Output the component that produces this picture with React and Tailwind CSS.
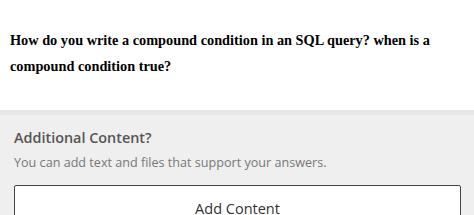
export default function App() {
  return (
    <div className="w-[474px] h-[215px] overflow-hidden bg-white">
      <div className="h-[110px] bg-white px-[10px] pt-[27px]">
        <p className="font-['Liberation_Serif',serif] font-bold text-[14.3px] leading-[26px] text-black">
          How do you write a compound condition in an SQL query? when is a compound condition true?
        </p>
      </div>
      <div className="h-[105px] bg-[#efefef] border-t-[5px] border-[#e6e6e6] px-[14px] pt-[13px] font-['Open_Sans',sans-serif]">
        <h3 className="text-[14.4px] font-semibold leading-[20px] text-[#555]">Additional Content?</h3>
        <p className="mt-[5px] text-[12.6px] leading-[20px] text-[#777]">You can add text and files that support your answers.</p>
        <button className="mt-[12px] w-[447px] h-[40px] bg-white border-[1.5px] border-[#444] rounded-[2px] text-[14.5px] leading-[20px] text-[#333] pt-[13px] flex justify-center">
          Add Content
        </button>
      </div>
    </div>
  );
}
